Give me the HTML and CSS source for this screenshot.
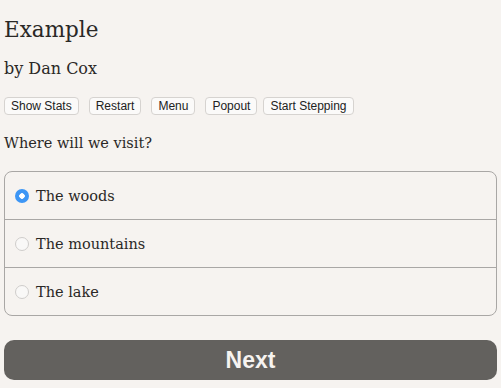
FILE: index.html
```html
<!DOCTYPE html>
<html lang="en">
  <head>
    <meta charset="UTF-8" />
    <title>Example</title>
    <link rel="stylesheet" href="styles.css">
  </head>
  <body>
    <div class="story">
      <h1 class="title">Example</h1>
      <p class="author">by Dan Cox</p>
      <div class="toolbar">
        <button class="tool">Show Stats</button>
        <button class="tool">Restart</button>
        <button class="tool">Menu</button>
        <button class="tool">Popout</button>
        <button class="tool">Start Stepping</button>
      </div>
      <p class="question">Where will we visit?</p>
      <div class="choices">
        <label class="choice">
          <span class="radio checked"></span>
          The woods
        </label>
        <label class="choice">
          <span class="radio"></span>
          The mountains
        </label>
        <label class="choice">
          <span class="radio"></span>
          The lake
        </label>
      </div>
      <button class="next">Next</button>
    </div>
  </body>
</html>
```

FILE: styles.css
```css
body {
  margin: 0;
  background-color: #f6f3f0;
  color: #2a2826;
  font-family: "DejaVu Serif", Georgia, serif;
}

p,
h1 {
  margin: 0;
}

.story {
  padding: 0 4px;
}

.title {
  font-weight: normal;
  font-size: 21.5px;
  padding-top: 16px;
  line-height: 28px;
}

.author {
  font-size: 16px;
  margin-top: 14px;
  line-height: 22px;
}

.toolbar {
  display: flex;
  gap: 10px;
  margin-top: 17px;
}

.tool {
  font-family: "Liberation Sans", Arial, sans-serif;
  font-size: 12px;
  height: 18px;
  padding: 0 6px;
  background: #fbfaf9;
  border: 1px solid #d6d3d0;
  border-radius: 4px;
  color: #222;
}

.toolbar .tool:last-child {
  margin-left: -4px;
}

.question {
  font-size: 14.5px;
  margin-top: 18px;
  line-height: 20px;
}

.choices {
  margin-top: 18px;
  border: 1px solid #a9a7a5;
  border-radius: 8px;
}

.choice {
  display: flex;
  align-items: center;
  gap: 7px;
  height: 47px;
  padding-left: 10px;
  font-size: 14.5px;
  border-top: 1px solid #a9a7a5;
}

.choice:first-child {
  border-top: none;
}

.radio {
  width: 12px;
  height: 12px;
  border-radius: 50%;
  border: 1px solid #cfcdcb;
  background: #f9f8f7;
}

.radio.checked {
  width: 14px;
  height: 14px;
  border: none;
  background: radial-gradient(circle, #fff 2.5px, #3d96f5 3px);
}

.next {
  display: block;
  width: 100%;
  height: 40px;
  margin-top: 24px;
  background: #63615e;
  color: #f6f3f0;
  border: none;
  border-radius: 10px;
  font-family: "Liberation Sans", Arial, sans-serif;
  font-weight: bold;
  font-size: 23px;
}
```
